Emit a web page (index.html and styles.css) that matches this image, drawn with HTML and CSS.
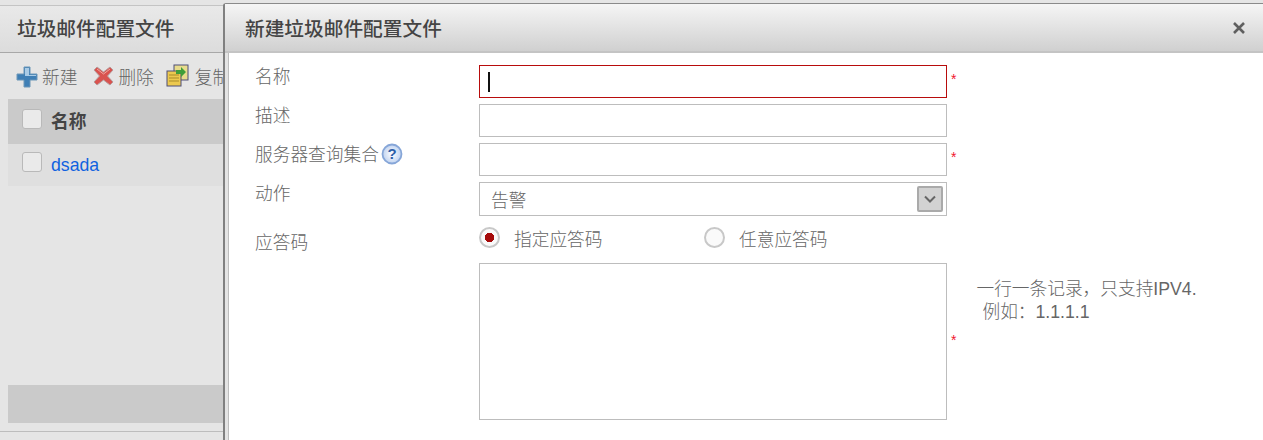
FILE: index.html
```html
<!DOCTYPE html>
<html>
    <head>
        <title>垃圾邮件配置文件</title>
        <link rel="stylesheet" href="styles.css">
    </head>
    <body>
        <!-- page behind the dialog -->
        <div class="list-panel">
            <div class="list-title">垃圾邮件配置文件</div>
            <div class="toolbar">
                <span class="tool">
                    <svg width="22" height="24" viewBox="0 0 22 24">
                        <path d="M8 3h6v7h7v6h-7v7H8v-7H1v-6h7z" fill="#3f7fb5" stroke="#6d97b8" stroke-width="1"/>
                        <path d="M9 4h4v7h7v1H9z" fill="#a9cbe6"/>
                    </svg>
                    新建
                </span>
                <span class="tool">
                    <svg width="21" height="22" viewBox="0 0 21 22">
                        <path d="M4 2l6.5 5 6.500-5 3 3-5.500 6 5.500 6-3 3-6.500-5-6.500 5-3-3 5.500-6-5.500-6z" fill="#d9534f" stroke="#b89a9a" stroke-width="1" stroke-linejoin="round"/>
                        <path d="M4 4l6.500 5 6.500-5" fill="none" stroke="#f0a8a0" stroke-width="1"/>
                    </svg>
                    删除
                </span>
                <span class="tool tool-copy">
                    <svg width="23" height="24" viewBox="0 0 23 24">
                        <rect x="8" y="1" width="14" height="15" fill="#e8dc8c" stroke="#4f4f78"/>
                        <rect x="1" y="7" width="14" height="15" fill="#ecc94f" stroke="#4f4f78"/>
                        <path d="M3 11h10M3 14h10M3 17h10" stroke="#a98b2a"/>
                        <path d="M10 6h5V3l5 5-5 5v-3h-5z" fill="#3f9e3a"/>
                    </svg>
                    复制
                </span>
            </div>
            <div class="grid-head">
                <span class="check"></span>
                <b class="grid-head-text">名称</b>
            </div>
            <div class="grid-row">
                <span class="check"></span>
                <a class="row-link">dsada</a>
            </div>
            <div class="grid-empty"></div>
            <div class="grid-foot"></div>
            <div class="list-bottom"></div>
        </div>

        <!-- dialog -->
        <div class="dialog">
            <div class="dialog-title">
                <span>新建垃圾邮件配置文件</span>
                <svg class="dialog-close" width="14" height="14" viewBox="0 0 14 14">
                    <path d="M2 2l10 10M12 2L2 12" stroke="#5f5f5f" stroke-width="2.6"/>
                </svg>
            </div>
            <div class="form">
                <label class="form-label">名称</label>
                <div class="form-field"><div class="input input-focus"><span class="caret"></span></div><span class="star">*</span></div>

                <label class="form-label">描述</label>
                <div class="form-field"><div class="input"></div></div>

                <label class="form-label">服务器查询集合<svg class="help" width="22" height="22" viewBox="0 0 22 22">
                    <defs>
                        <radialGradient id="helpFill">
                            <stop offset="0" stop-color="#ffffff"/>
                            <stop offset="1" stop-color="#bfd2f0"/>
                        </radialGradient>
                    </defs>
                    <circle cx="11" cy="11" r="9.500" fill="url(#helpFill)" stroke="#86a6d8" stroke-width="1.800"/>
                    <text x="11" y="16" text-anchor="middle" class="help-mark">?</text>
                </svg></label>
                <div class="form-field"><div class="input"></div><span class="star">*</span></div>

                <label class="form-label">动作</label>
                <div class="form-field">
                    <div class="select">
                        <span>告警</span>
                        <span class="select-btn">
                            <svg width="14" height="9" viewBox="0 0 14 9"><path d="M2 1.500l5 5 5-5" fill="none" stroke="#666" stroke-width="2"/></svg>
                        </span>
                    </div>
                </div>

                <label class="form-label form-label-code">应答码</label>
                <div class="radios">
                    <span class="radio-item"><span class="radio radio-on"></span>指定应答码</span>
                    <span class="radio-item"><span class="radio"></span>任意应答码</span>
                </div>

                <div></div>
                <div class="form-field form-field-area">
                    <div class="textarea"></div>
                    <span class="star star-area">*</span>
                    <div class="hint">
                        <div>一行一条记录，只支持IPV4.</div>
                        <div class="hint-sub">例如：1.1.1.1</div>
                    </div>
                </div>
            </div>
        </div>
    </body>
</html>
```
FILE: styles.css
```css
html, body {
    margin: 0;
    padding: 0;
    height: 440px;
    overflow: hidden;
}

body {
    background-color: #e5e5e5;
    font-family: "Liberation Sans", "Noto Sans CJK SC", sans-serif;
    font-size: 17.7px;
    color: #666;
}

/* left list behind the dialog */
.list-panel {
    display: flex;
    flex-direction: column;
    height: 440px;
    padding-top: 5px;
    box-sizing: border-box;
}
.list-title {
    height: 48px;
    line-height: 46px;
    padding-left: 17px;
    box-sizing: border-box;
    border-top: 1px solid #c4c4c4;
    border-bottom: 1px solid #a8a8a8;
    background: linear-gradient(#e9e9e9, #dcdcdc);
    font-size: 19.7px;
    font-weight: 500;
    color: #444;
}
.toolbar {
    display: flex;
    align-items: center;
    gap: 16px;
    height: 46px;
    padding-left: 16px;
    white-space: nowrap;
    overflow: hidden;
    font-size: 17.7px;
    font-weight: 300;
}
.tool {
    display: flex;
    align-items: center;
    gap: 4px;
}
.tool-copy {
    gap: 6px;
    margin-left: -4px;
}
.grid-head, .grid-row {
    display: flex;
    align-items: center;
    gap: 9px;
    margin-left: 8px;
    padding-left: 14px;
}
.grid-head {
    height: 45px;
    background-color: #cacaca;
    color: #444;
}
.grid-head-text {
    margin-bottom: 3px;
}
.grid-row {
    height: 42px;
    background-color: #dfdfdf;
}
.check {
    width: 18px;
    height: 18px;
    margin-bottom: 6px;
    border: 1px solid #b9b9b9;
    border-radius: 3px;
    background-color: #eaeaea;
}
.row-link {
    color: #0f62e0;
}
.grid-empty {
    height: 199px;
}
.grid-foot {
    height: 38px;
    margin-left: 8px;
    background-color: #cacaca;
}
.list-bottom {
    margin-top: 8px;
    border-top: 1px solid #bdbdbd;
}

/* dialog */
.dialog {
    position: absolute;
    left: 223px;
    top: 3px;
    width: 1040px;
    height: 437px;
    display: flex;
    flex-direction: column;
    box-sizing: border-box;
    background-color: #fff;
    border-top: 1px solid #8a8a8a;
    border-left: 2px solid #808080;
    border-top-left-radius: 3px;
}
.dialog-title {
    display: flex;
    align-items: center;
    justify-content: space-between;
    height: 49px;
    flex-shrink: 0;
    box-sizing: border-box;
    padding: 0 17px 0 20px;
    background: linear-gradient(#f5f5f5, #d0d0d0);
    border-bottom: 2px solid #c4c4c4;
    font-size: 19.7px;
    font-weight: 500;
    color: #444;
}
.form {
    flex: 1;
    display: grid;
    grid-template-columns: 224px 1fr;
    grid-auto-rows: min-content;
    row-gap: 6px;
    padding: 12px 0 0 30px;
    font-weight: 300;
    box-shadow: inset 3px 0 0 #e4e4e4, inset 4px 0 0 #bdbdbd;
}
.form-label {
    display: flex;
    align-items: flex-start;
    line-height: 24px;
    white-space: nowrap;
}
.form-label-code {
    padding-top: 9px;
}
.help {
    margin-left: 2px;
}
.help-mark {
    font-family: "Liberation Sans", sans-serif;
    font-weight: bold;
    font-size: 15px;
    fill: #2f5fa8;
}
.form-field {
    display: flex;
    align-items: center;
}
.input {
    display: flex;
    align-items: center;
    width: 468px;
    height: 33px;
    box-sizing: border-box;
    border: 1px solid #bdbdbd;
    padding-left: 8px;
}
.input-focus {
    border-color: #b80c0c;
}
.caret {
    width: 2px;
    height: 20px;
    background-color: #111;
}
.star {
    color: #f0152d;
    font-size: 14px;
    line-height: 14px;
    margin: 0 0 6px 4px;
}
.select {
    display: flex;
    align-items: center;
    justify-content: space-between;
    width: 468px;
    height: 34px;
    box-sizing: border-box;
    border: 1px solid #bdbdbd;
    padding: 0 3px 0 11px;
}
.select-btn {
    display: flex;
    align-items: center;
    justify-content: center;
    width: 26px;
    height: 26px;
    box-sizing: border-box;
    background-color: #d2d2d2;
    border: 2px solid #aaa;
    border-radius: 2px;
}
.radios {
    display: flex;
    height: 41px;
    align-items: center;
    margin-top: -5px;
    margin-bottom: -5px;
}
.radio-item {
    display: flex;
    align-items: center;
    gap: 14px;
    width: 225px;
}
.radio {
    width: 21px;
    height: 21px;
    box-sizing: border-box;
    border: 2px solid #c8c8c8;
    border-radius: 50%;
    background-color: #fafafa;
}
.radio-on {
    background: radial-gradient(circle, #a50a0a 0 4.500px, #fafafa 5px);
}
.form-field-area {
    align-items: flex-start;
    margin-top: 2px;
}
.textarea {
    width: 468px;
    height: 157px;
    box-sizing: border-box;
    border: 1px solid #bdbdbd;
}
.star-area {
    margin-top: 70px;
}
.hint {
    margin: 15px 0 0 20px;
    line-height: 23px;
    white-space: nowrap;
}
.hint-sub {
    padding-left: 6px;
}
```
